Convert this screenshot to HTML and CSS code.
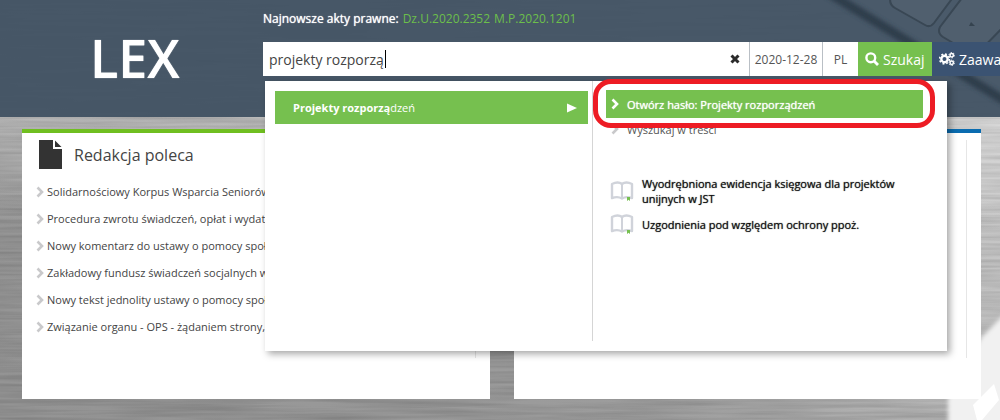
FILE: index.html
```html
<!DOCTYPE html>
<html lang="pl">
<head>
  <meta charset="UTF-8">
  <meta name="viewport" content="width=device-width, initial-scale=1">
  <title>LEX</title>
  <link rel="stylesheet" href="styles.css">
</head>
<body>

<!-- icons -->
<svg class="sprite" aria-hidden="true">
  <symbol id="chevron" viewBox="0 0 8 12">
    <path d="M1.5 1.5 L6 6 L1.5 10.5" fill="none" stroke="currentColor" stroke-width="2.6"/>
  </symbol>
  <symbol id="book" viewBox="0 0 24 20">
    <path d="M2 3 Q8 0 12 3 Q16 0 22 3 V17 Q16 15 12 17.500 Q8 15 2 17 Z" fill="#fff" stroke="#d0d3da" stroke-width="2.400" stroke-linejoin="round"/>
    <path d="M12 3 V17" stroke="#d0d3da" stroke-width="2"/>
    <path d="M17 16 H20 V20 L18.500 18.700 L17 20 Z" fill="#76c04f"/>
  </symbol>
</svg>

<!-- brushed metal with a keyboard in the corner -->
<svg class="backdrop" viewBox="0 0 1000 420" preserveAspectRatio="xMaxYMin slice" aria-hidden="true">
  <defs>
    <linearGradient id="steel" x1="0" y1="0.9" x2="1" y2="0.5">
      <stop offset="0" stop-color="#949494"/>
      <stop offset="0.5" stop-color="#9c9c9c"/>
      <stop offset="1" stop-color="#c8c8c8"/>
    </linearGradient>
    <linearGradient id="shine" x1="0" y1="0" x2="0" y2="1">
      <stop offset="0.25" stop-color="#fff" stop-opacity="0.35"/>
      <stop offset="0.55" stop-color="#fff" stop-opacity="0"/>
    </linearGradient>
    <filter id="brushed" x="0" y="0" width="100%" height="100%">
      <feTurbulence type="fractalNoise" baseFrequency="0.008 0.25" numOctaves="3" seed="4"/>
      <feColorMatrix values="0 0 0 0 0  0 0 0 0 0  0 0 0 0 0  0.24 0 0 0 -0.07"/>
    </filter>
    <filter id="soft"><feGaussianBlur stdDeviation="2"/></filter>
  </defs>
  <rect width="1000" height="420" fill="url(#steel)"/>
  <rect width="1000" height="420" fill="url(#shine)"/>
  <rect width="1000" height="420" filter="url(#brushed)"/>
  <path d="M948 430 V398 L981 338 L1010 308 V430 Z" fill="#f1f1f1" filter="url(#soft)"/>
  <path d="M973 405 L994 384 L999 400 L982 420 H977 Z" fill="#fff"/>
  <rect class="tint" width="1000" height="117"/>
  <path d="M838 0 L1000 95 V0 Z" fill="#4a5a6a"/>
  <path d="M824 -10 L1010 104" stroke="#2e3d4c" stroke-width="9" filter="url(#soft)"/>
  <g fill="#505f6e" stroke="#394754" stroke-width="2">
    <path d="M891 -4 Q888 4 895 8 L925 25 Q930 28 934 23 L954 -4 Z"/>
    <path d="M962 -2 L940 27 Q937 33 943 37 L975 56 L1010 20 V-4 Z"/>
  </g>
  <path d="M969 26 L971 22 L975 26 Z" fill="#35434f"/>
</svg>

<header class="header">
  <h1 class="logo">LEX</h1>
  <div class="search">
    <p class="latest">
      <strong>Najnowsze akty prawne:</strong>
      <a href="#">Dz.U.2020.2352</a>
      <a href="#">M.P.2020.1201</a>
    </p>
    <form class="search-bar">
      <div class="query">
        <input type="text" aria-label="Szukaj w LEX" value="projekty rozporzą">
        <span class="caret"></span>
        <button type="button" class="clear" aria-label="Wyczyść">
          <svg width="10" height="10" viewBox="0 0 10 10"><path d="M1.500 1.500 L8.500 8.500 M8.500 1.500 L1.500 8.500" stroke="#2b2b2b" stroke-width="3"/></svg>
        </button>
      </div>
      <button type="button" class="date">2020-12-28</button>
      <button type="button" class="lang">PL</button>
      <button type="submit" class="submit">
        <svg width="14" height="14" viewBox="0 0 14 14"><circle cx="5.800" cy="5.800" r="4.400" fill="none" stroke="#fff" stroke-width="2.400"/><path d="M9 9 L13 13" stroke="#fff" stroke-width="2.800"/></svg>
        Szukaj
      </button>
      <button type="button" class="advanced">
        <svg width="16" height="14" viewBox="0 0 16 14" fill="none" stroke="#fff">
          <circle cx="5.500" cy="7" r="3.200" stroke-width="2.400"/>
          <circle cx="5.500" cy="7" r="4.900" stroke-width="1.600" stroke-dasharray="1.920 1.920"/>
          <circle cx="12.700" cy="3.200" r="1.700" stroke-width="1.500"/>
          <circle cx="12.700" cy="3.200" r="2.700" stroke-width="1" stroke-dasharray="1.410 1.410"/>
          <circle cx="12.700" cy="10.800" r="1.700" stroke-width="1.500"/>
          <circle cx="12.700" cy="10.800" r="2.700" stroke-width="1" stroke-dasharray="1.410 1.410"/>
        </svg>
        Zaawansowane
      </button>
    </form>

    <div class="suggest">
      <div class="suggest-phrases">
        <a class="phrase" href="#">
          <span><b>Projekty rozporzą</b>dzeń</span>
          <svg width="10" height="10" viewBox="0 0 10 10"><path d="M0 0.500 L10 5 L0 9.500 Z" fill="#fff"/></svg>
        </a>
      </div>
      <div class="suggest-actions">
        <a class="action active" href="#"><svg class="chevron"><use href="#chevron"/></svg>Otwórz hasło: Projekty rozporządzeń</a>
        <a class="action" href="#"><svg class="chevron"><use href="#chevron"/></svg>Wyszukaj w treści</a>
        <ul class="docs">
          <li><svg class="book"><use href="#book"/></svg><a href="#">Wyodrębniona ewidencja księgowa dla projektów unijnych w JST</a></li>
          <li><svg class="book"><use href="#book"/></svg><a href="#">Uzgodnienia pod względem ochrony ppoż.</a></li>
        </ul>
        <div class="marker"></div>
      </div>
    </div>
  </div>
</header>

<main class="panels">
  <section class="panel">
    <div class="panel-body">
      <h2>
        <svg width="23" height="29" viewBox="0 0 23 29" fill="#333"><path d="M0 0 H14 V9 H23 V29 H0 Z"/><path d="M16 0.500 L22.500 7 H16 Z"/></svg>
        Redakcja poleca
      </h2>
      <ul class="news">
        <li><svg class="chevron"><use href="#chevron"/></svg><a href="#">Solidarnościowy Korpus Wsparcia Seniorów</a></li>
        <li><svg class="chevron"><use href="#chevron"/></svg><a href="#">Procedura zwrotu świadczeń, opłat i wydatków</a></li>
        <li><svg class="chevron"><use href="#chevron"/></svg><a href="#">Nowy komentarz do ustawy o pomocy społecznej</a></li>
        <li><svg class="chevron"><use href="#chevron"/></svg><a href="#">Zakładowy fundusz świadczeń socjalnych w</a></li>
        <li><svg class="chevron"><use href="#chevron"/></svg><a href="#">Nowy tekst jednolity ustawy o pomocy społecznej</a></li>
        <li><svg class="chevron"><use href="#chevron"/></svg><a href="#">Związanie organu - OPS - żądaniem strony, c</a></li>
      </ul>
    </div>
  </section>
  <section class="panel blue">
    <div class="panel-body"></div>
  </section>
</main>

</body>
</html>
```
FILE: styles.css
```css
* {
  box-sizing: border-box;
}
body {
  margin: 0;
  min-height: 100vh;
  position: relative;
  overflow-x: hidden;
  background: #959595;
  color: #444;
  font-family: "Open Sans", sans-serif;
  font-size: 11px;
}
a {
  color: inherit;
  text-decoration: none;
}
ul {
  list-style: none;
  margin: 0;
  padding: 0;
}
button {
  border: none;
  margin: 0;
  padding: 0;
  font-family: inherit;
  cursor: pointer;
}
svg {
  flex: none;
}
.sprite {
  position: absolute;
  width: 0;
  height: 0;
}
.backdrop {
  position: absolute;
  top: 0;
  left: 0;
  width: 100%;
  height: 100%;
  z-index: -1;
}
.tint {
  fill: #405162;
  fill-opacity: 0.95;
}
.chevron {
  width: 8px;
  height: 12px;
  color: #c9c9cb;
}

/* header */
.header {
  display: flex;
  height: 117px;
}
.logo {
  flex: 0 0 263px;
  margin: 0;
  padding: 20px 0 0 90px;
  color: #fff;
  font-size: 52px;
  font-weight: 600;
  line-height: 76px;
  text-shadow: 0 0 1px #fff;
}
.search {
  position: relative;
  flex: 1;
  min-width: 0;
}
.latest {
  display: flex;
  gap: 4px;
  margin: 0;
  padding: 9px 0 13px;
  font-size: 12px;
  line-height: 20px;
}
.latest strong {
  color: #fff;
  font-weight: 400;
  text-shadow: 0 0 1px #fff;
}
.latest a {
  color: #6cbf4b;
}
.search-bar {
  display: flex;
  height: 34px;
  overflow: hidden;
}
.search-bar button {
  flex: none;
  background: #fff;
  color: #555;
}
.query {
  position: relative;
  display: flex;
  flex: 0 0 486px;
  background: #fff;
}
.query input {
  flex: 1;
  min-width: 0;
  border: none;
  outline: none;
  padding: 0 6px;
  background: none;
  color: #444;
  font-family: inherit;
  font-size: 14px;
}
.caret {
  position: absolute;
  left: 122px;
  top: 8px;
  width: 1px;
  height: 18px;
  background: #000;
}
.query .clear {
  display: flex;
  align-items: center;
  justify-content: center;
  width: 28px;
}
.search-bar .date,
.search-bar .lang {
  border-left: 1px solid #b9bfc5;
  font-size: 12px;
}
.search-bar .date {
  width: 73px;
}
.search-bar .lang {
  width: 36px;
}
.search-bar .submit,
.search-bar .advanced {
  display: flex;
  align-items: center;
  gap: 4px;
  padding: 0 7px;
  color: #fff;
  font-size: 14px;
}
.search-bar .submit {
  width: 74px;
  background: #76c04f;
}
.search-bar .advanced {
  background: #3b5372;
}

/* suggestions */
.suggest {
  position: absolute;
  top: 81px;
  left: 2px;
  z-index: 2;
  display: flex;
  width: 682px;
  min-height: 270px;
  padding-bottom: 10px;
  background: #fff;
  box-shadow: 3px 3px 7px rgba(0, 0, 0, 0.35);
}
.suggest-phrases {
  flex: 1;
  padding: 10px 4px 0 10px;
  border-right: 1px solid #d5d5d5;
}
.phrase {
  display: flex;
  align-items: center;
  justify-content: space-between;
  height: 33px;
  padding: 0 11px 0 18px;
  background: #76c04f;
  color: #fff;
}
.suggest-actions {
  position: relative;
  flex: 0 0 354px;
  padding: 9px 24px 0 13px;
}
.action {
  display: flex;
  align-items: center;
  gap: 8px;
  height: 22px;
  padding-left: 5px;
  color: #555;
}
.action.active {
  height: 28px;
  background: #76c04f;
  color: #fff;
  text-shadow: 0 0 1px #fff;
}
.action.active .chevron {
  color: #fff;
}
.docs {
  padding: 36px 12px 0 4px;
}
.docs li {
  display: flex;
  align-items: center;
  gap: 8px;
  margin-bottom: 8px;
  color: #111;
  line-height: 15px;
  text-shadow: 0 0 1px #333;
}
.book {
  width: 24px;
  height: 20px;
}
.marker {
  position: absolute;
  top: -2px;
  left: 0;
  right: 12px;
  height: 49px;
  border: 5px solid #ed1c24;
  border-radius: 18px;
}

/* panels */
.panels {
  display: grid;
  grid-template-columns: 1fr 1fr;
  gap: 24px;
  padding: 12px 19px 20px 22px;
}
.panel {
  min-width: 0;
  min-height: 270px;
  padding: 7px 14px 41px;
  border-top: 4px solid #70bf20;
  background: #fff;
}
.panel.blue {
  border-top-color: #0a6cb0;
}
.panel-body {
  height: 100%;
  border-right: 1px solid #e6e6e6;
}
.panel h2 {
  display: flex;
  align-items: center;
  gap: 12px;
  margin: 0;
  padding: 0 0 9px 3px;
  font-size: 16px;
  font-weight: 400;
  line-height: 24px;
}
.news li {
  display: flex;
  align-items: center;
  gap: 3px;
  height: 27px;
  overflow: hidden;
  white-space: nowrap;
}
```
